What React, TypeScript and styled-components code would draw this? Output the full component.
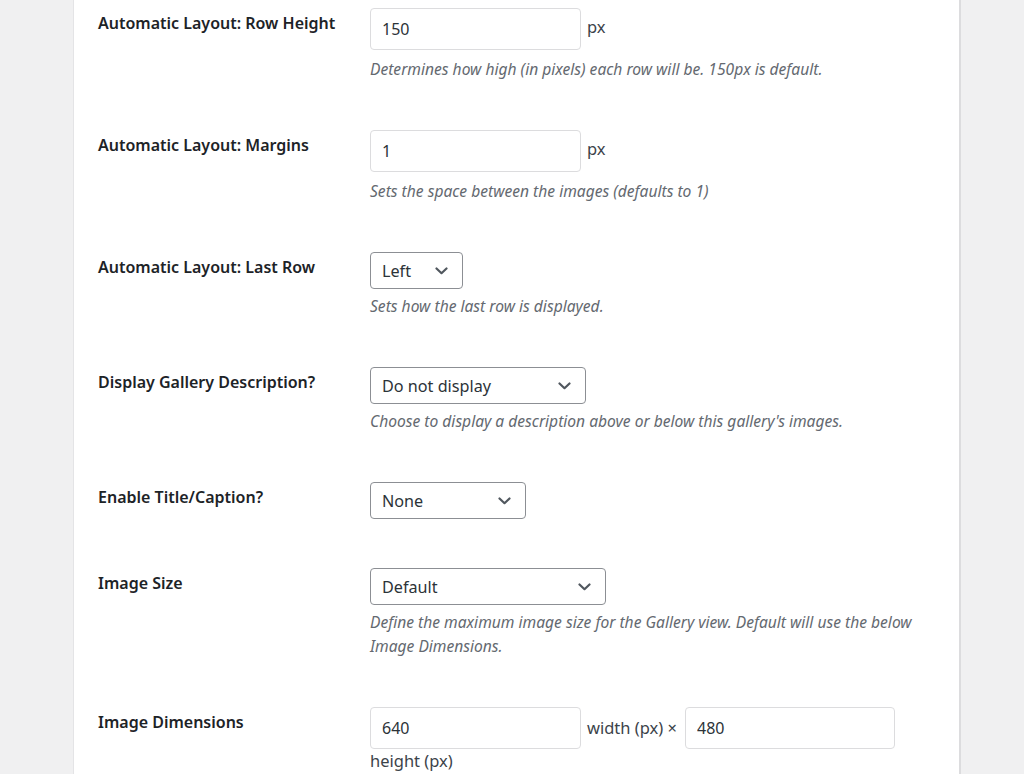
import React from "react";
import styled, { createGlobalStyle } from "styled-components";

const Global = createGlobalStyle`
  html, body { margin: 0; padding: 0; background: #f0f0f1; }
  body { font-family: "Noto Sans", "Open Sans", sans-serif; overflow: hidden; }
`;

const Panel = styled.div`
  margin: -16.5px 0 0 73px;
  width: 888px;
  min-height: 820px;
  background: #fff;
  border-left: 1px solid #e4e4e6;
  border-right: 2px solid #dcdcde;
  box-sizing: border-box;
  padding: 0 30px 0 24px;
`;

const Row = styled.div`
  display: grid;
  grid-template-columns: 272px 1fr;
  padding: 24.5px 0;
`;

const Label = styled.div`
  font-size: 16px;
  font-weight: 600;
  color: #1d2327;
  line-height: 20px;
  padding-top: 5px;
`;

const Field = styled.div`
  font-size: 16px;
  color: #3c434a;
  line-height: 24px;
`;

const Line = styled.div`
  display: flex;
  align-items: center;
  flex-wrap: wrap;
  gap: 0 6px;
`;

const TextInput = styled.input`
  box-sizing: border-box;
  width: ${(p: { $w: number }) => p.$w}px;
  height: 42px;
  border: 1px solid #dcdcde;
  border-radius: 4px;
  padding: 0 11px;
  font: inherit;
  font-size: 16px;
  color: #2c3338;
  background: #fff;
  outline: none;
`;

const Unit = styled.span`
  font-size: 16.5px;
  color: #3c434a;
  line-height: 24px;
  margin-top: ${(p: { $mt?: number }) => p.$mt ?? -4}px;
  margin-right: ${(p: { $mr?: number }) => p.$mr ?? 0}px;
`;

const Wrapped = styled.span`
  flex-basis: 100%;
  font-size: 16.5px;
  color: #3c434a;
  line-height: 24px;
`;

const SelectBox = styled.div`
  box-sizing: border-box;
  width: ${(p: { $w: number }) => p.$w}px;
  height: 37px;
  border: 1px solid #8c8f94;
  border-radius: 4px;
  display: flex;
  align-items: center;
  justify-content: space-between;
  padding: 0 14px 0 11px;
  font-size: 16.2px;
  color: #2c3338;
  background: #fff;
`;

const Desc = styled.div`
  font-style: italic;
  font-size: 15.6px;
  color: #646970;
  line-height: 24px;
  margin-top: ${(p: { $mt?: number }) => p.$mt ?? 7}px;
  max-width: 560px;
`;

const Chevron = () => (
  <svg width="13" height="8" viewBox="0 0 13 8" fill="none">
    <path d="M1.5 1.5 L6.5 6.2 L11.5 1.5" stroke="#50575e" strokeWidth="2.2" strokeLinecap="round" strokeLinejoin="round" />
  </svg>
);

const Select = ({ w, value }: { w: number; value: string }) => (
  <SelectBox $w={w}>
    <span>{value}</span>
    <Chevron />
  </SelectBox>
);

export default function App() {
  return (
    <>
      <Global />
      <Panel>
        <Row>
          <Label>Automatic Layout: Row Height</Label>
          <Field>
            <Line>
              <TextInput $w={211} defaultValue="150" />
              <Unit>px</Unit>
            </Line>
            <Desc>Determines how high (in pixels) each row will be. 150px is default.</Desc>
          </Field>
        </Row>
        <Row>
          <Label>Automatic Layout: Margins</Label>
          <Field>
            <Line>
              <TextInput $w={211} defaultValue="1" />
              <Unit>px</Unit>
            </Line>
            <Desc>Sets the space between the images (defaults to 1)</Desc>
          </Field>
        </Row>
        <Row>
          <Label>Automatic Layout: Last Row</Label>
          <Field>
            <Select w={93} value="Left" />
            <Desc $mt={5}>Sets how the last row is displayed.</Desc>
          </Field>
        </Row>
        <Row>
          <Label>Display Gallery Description?</Label>
          <Field>
            <Select w={216} value="Do not display" />
            <Desc $mt={5}>Choose to display a description above or below this gallery's images.</Desc>
          </Field>
        </Row>
        <Row>
          <Label>Enable Title/Caption?</Label>
          <Field>
            <Select w={156} value="None" />
          </Field>
        </Row>
        <Row>
          <Label>Image Size</Label>
          <Field>
            <Select w={236} value="Default" />
            <Desc $mt={5}>Define the maximum image size for the Gallery view. Default will use the below Image Dimensions.</Desc>
          </Field>
        </Row>
        <Row>
          <Label>Image Dimensions</Label>
          <Field>
            <Line>
              <TextInput $w={211} defaultValue="640" />
              <Unit $mt={0} $mr={2}>width (px) ×</Unit>
              <TextInput $w={210} defaultValue="480" />
              <Wrapped>height (px)</Wrapped>
            </Line>
          </Field>
        </Row>
      </Panel>
    </>
  );
}
